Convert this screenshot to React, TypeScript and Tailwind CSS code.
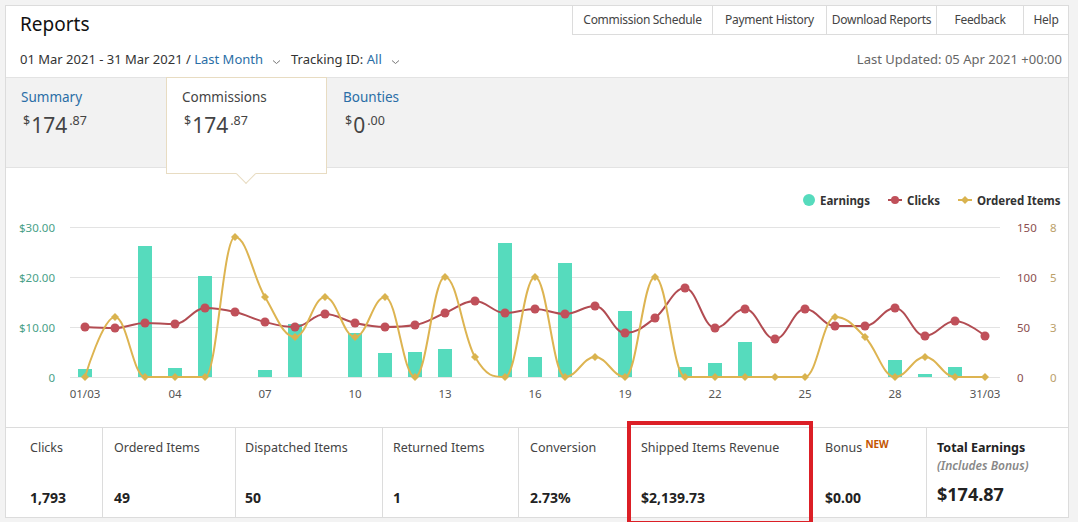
import React from "react";

const earnings = [1.6, 0, 26.2, 1.8, 20.2, 0, 1.4, 10.6, 0, 8.8, 4.8, 5, 5.6, 0, 26.8, 4, 22.8, 0, 13.2, 0, 2, 2.8, 7, 0, 0, 0, 0, 3.4, 0.6, 2, 0];
const clicks = [50, 49, 54, 53, 69, 65, 55, 50, 63, 54, 50, 52, 64, 76, 64, 68, 63, 71, 44, 59, 89, 49, 68, 38, 68, 51, 51, 69, 41, 56, 41];
const ordered = [0, 3, 0, 0, 0, 7, 4, 2, 4, 2, 4, 0, 5, 1, 0, 5, 0, 1, 0, 5, 0, 0, 0, 0, 0, 3, 2, 0, 1, 0, 0];

const dayX = (i: number) => 85 + i * 30;
const BASE = 377;

type Pt = { x: number; y: number };

// highcharts-like spline: flat tangents at local extremes
function spline(pts: Pt[]) {
  const ctrl = pts.map((p, i) => {
    if (i === 0 || i === pts.length - 1) return { lx: p.x, ly: p.y, rx: p.x, ry: p.y };
    const a = pts[i - 1];
    const b = pts[i + 1];
    const lx = (1.5 * p.x + a.x) / 2.5;
    let ly = (1.5 * p.y + a.y) / 2.5;
    const rx = (1.5 * p.x + b.x) / 2.5;
    let ry = (1.5 * p.y + b.y) / 2.5;
    const corr = ((ry - ly) * (rx - p.x)) / (rx - lx) + p.y - ry;
    ly += corr;
    ry += corr;
    if (ly > a.y && ly > p.y) {
      ly = Math.max(a.y, p.y);
      ry = 2 * p.y - ly;
    } else if (ly < a.y && ly < p.y) {
      ly = Math.min(a.y, p.y);
      ry = 2 * p.y - ly;
    }
    if (ry > b.y && ry > p.y) {
      ry = Math.max(b.y, p.y);
      ly = 2 * p.y - ry;
    } else if (ry < b.y && ry < p.y) {
      ry = Math.min(b.y, p.y);
      ly = 2 * p.y - ry;
    }
    return { lx, ly, rx, ry };
  });
  let d = `M ${pts[0].x} ${pts[0].y}`;
  for (let i = 1; i < pts.length; i++) {
    d += ` C ${ctrl[i - 1].rx} ${ctrl[i - 1].ry} ${ctrl[i].lx} ${ctrl[i].ly} ${pts[i].x} ${pts[i].y}`;
  }
  return d;
}

const clickPts = clicks.map((c, i) => ({ x: dayX(i), y: BASE - c }));
const orderPts = ordered.map((o, i) => ({ x: dayX(i), y: BASE - o * 20 }));

function Chevron() {
  return (
    <svg width="9" height="6" viewBox="0 0 9 6" className="ml-[9px] mt-[4px]">
      <path d="M1 1.5 L4.5 4.5 L8 1.5" fill="none" stroke="#777" strokeWidth="1" />
    </svg>
  );
}

function Chart() {
  const grid = [227, 277, 327, 377];
  const left = ["$30.00", "$20.00", "$10.00", "0"];
  const rightA = ["150", "100", "50", "0"];
  const rightB = ["8", "5", "3", "0"];
  const xLabels = ["01/03", "04", "07", "10", "13", "16", "19", "22", "25", "28", "31/03"];
  return (
    <svg width="1062" height="259" viewBox="6 168 1062 259" className="block">
      {/* legend */}
      <circle cx="809" cy="200" r="6" fill="#56dbbd" />
      <text x="820" y="204.5" fontSize="11.5" fontWeight="700" fill="#333">Earnings</text>
      <line x1="888" y1="200" x2="902" y2="200" stroke="#b24c52" strokeWidth="2" />
      <circle cx="895" cy="200" r="4" fill="#c0505a" />
      <text x="907" y="204.5" fontSize="11.5" fontWeight="700" fill="#333">Clicks</text>
      <line x1="958" y1="200" x2="972" y2="200" stroke="#ddb451" strokeWidth="2" />
      <path d="M965 196 L969 200 L965 204 L961 200 Z" fill="#d9b34f" />
      <text x="977" y="204.5" fontSize="11.5" fontWeight="700" fill="#333">Ordered Items</text>

      {/* grid + axes */}
      {grid.map((y, i) => (
        <g key={y}>
          <line x1="70" y1={y + 0.5} x2="1000" y2={y + 0.5} stroke="#e3e3e3" strokeWidth="1" />
          <text x="55" y={y + 4.5} fontSize="11.5" fill="#4a9f88" textAnchor="end">{left[i]}</text>
          <text x="1017" y={y + 4.5} fontSize="11.5" fill="#8c4f4f">{rightA[i]}</text>
          <text x="1050" y={y + 4.5} fontSize="11.5" fill="#bba06a">{rightB[i]}</text>
        </g>
      ))}
      {xLabels.map((l, i) => (
        <text key={l} x={dayX(i * 3)} y="397.5" fontSize="11.5" fill="#555" textAnchor="middle">{l}</text>
      ))}

      {/* bars */}
      {earnings.map((v, i) =>
        v > 0 ? <rect key={i} x={dayX(i) - 7} y={BASE - v * 5} width="14" height={v * 5} fill="#56dbbd" /> : null
      )}

      {/* clicks */}
      <path d={spline(clickPts)} fill="none" stroke="#b24c52" strokeWidth="2" />
      {clickPts.map((p, i) => (
        <circle key={i} cx={p.x} cy={p.y} r="4.5" fill="#c0505a" />
      ))}

      {/* ordered items */}
      <path d={spline(orderPts)} fill="none" stroke="#ddb451" strokeWidth="2" />
      {orderPts.map((p, i) => (
        <path key={i} d={`M${p.x} ${p.y - 4} L${p.x + 4} ${p.y} L${p.x} ${p.y + 4} L${p.x - 4} ${p.y} Z`} fill="#d9b34f" />
      ))}
    </svg>
  );
}

function Amount({ whole, cents }: { whole: string; cents: string }) {
  return (
    <div className="flex items-start text-[#444] mt-[5px]">
      <span className="text-[12.5px] leading-[14px] mt-[2px] ml-[2px] mr-[1px]">$</span>
      <span className="text-[21px] leading-[26px]">{whole}</span>
      <span className="text-[12.5px] leading-[14px] mt-[2px] ml-[2px]">.{cents}</span>
    </div>
  );
}

const stats = [
  { label: "Clicks", value: "1,793", cls: "w-[96px] pl-[24px]" },
  { label: "Ordered Items", value: "49", cls: "w-[133px] pl-[11px] border-l border-[#dcdcdc]" },
  { label: "Dispatched Items", value: "50", cls: "w-[147px] pl-[9px] border-l border-[#dcdcdc]" },
  { label: "Returned Items", value: "1", cls: "w-[136px] pl-[10px] border-l border-[#dcdcdc]" },
  { label: "Conversion", value: "2.73%", cls: "w-[110px] pl-[11px] border-l border-[#dcdcdc]" },
  { label: "Shipped Items Revenue", value: "$2,139.73", cls: "w-[184px] pl-[12px] border-l border-[#dcdcdc]" },
];

export default function App() {
  return (
    <div className="relative w-[1078px] h-[522px] overflow-hidden bg-[#f3f3f3] pt-[5px] pl-[5px] font-['Noto_Sans',sans-serif] text-[#333]">
      <div className="w-[1064px] border border-[#dcdcdc] bg-white">
        {/* header */}
        <div className="h-[72px] border-b border-[#e3e3e3]">
          <div className="flex justify-between h-[36px]">
            <div className="pl-[14px] pt-[5px] text-[19px] leading-[26px] text-[#111]">Reports</div>
            <div className="flex items-start text-[12px] tracking-[-0.3px] text-[#444] whitespace-nowrap">
              {[
                ["Commission Schedule", "w-[140px]"],
                ["Payment History", "w-[114px]"],
                ["Download Reports", "w-[110px]"],
                ["Feedback", "w-[87px]"],
                ["Help", "w-[45px]"],
              ].map(([t, w]) => (
                <div key={t} className={`${w} h-[29px] flex items-center justify-center border-l border-b border-[#dcdcdc]`}>
                  {t}
                </div>
              ))}
            </div>
          </div>
          <div className="flex justify-between items-center h-[35px] pl-[14px] pr-[6px] text-[13px]">
            <div className="flex items-center">
              <span>01 Mar 2021 - 31 Mar 2021 /&nbsp;</span>
              <span className="text-[#2a6ea6]">Last Month</span>
              <Chevron />
              <span className="ml-[10px]">Tracking ID:&nbsp;</span>
              <span className="text-[#2a6ea6]">All</span>
              <Chevron />
            </div>
            <div className="text-[#666]">Last Updated: 05 Apr 2021 +00:00</div>
          </div>
        </div>

        {/* tabs band */}
        <div className="h-[90px] bg-[#f2f2f2] border-b border-[#e3e3e3] flex">
          <div className="w-[160px] pl-[15px] pt-[9px]">
            <div className="text-[13.5px] leading-[20px] text-[#2a6ea6]">Summary</div>
            <Amount whole="174" cents="87" />
          </div>
          <div className="relative z-10 -mt-px w-[161px] h-[97px] pl-[15px] pt-[9px] bg-white border border-[#e8dcc2]">
            <div className="text-[13.5px] leading-[20px] text-[#444]">Commissions</div>
            <Amount whole="174" cents="87" />
            <div className="absolute left-[72px] bottom-[-8px] w-[14px] h-[14px] rotate-45 bg-white border-r border-b border-[#e8dcc2]" />
          </div>
          <div className="w-[161px] pl-[16px] pt-[9px]">
            <div className="text-[13.5px] leading-[20px] text-[#2a6ea6]">Bounties</div>
            <Amount whole="0" cents="00" />
          </div>
        </div>

        {/* chart */}
        <Chart />

        {/* stats */}
        <div className="flex h-[90px] border-t border-[#dcdcdc]">
          {stats.map((s) => (
            <div key={s.label} className={`${s.cls} flex flex-col justify-between pt-[11px] pb-[10px]`}>
              <div className="text-[12.5px] leading-[18px] text-[#444]">{s.label}</div>
              <div className="text-[14px] leading-[18px] font-bold text-[#222]">{s.value}</div>
            </div>
          ))}
          <div className="w-[114px] pl-[12px] border-l border-[#dcdcdc] flex flex-col justify-between pt-[11px] pb-[10px]">
            <div className="text-[12.5px] leading-[18px] text-[#444]">
              Bonus <span className="relative top-[-4px] text-[10px] font-bold text-[#c45500]">NEW</span>
            </div>
            <div className="text-[14px] leading-[18px] font-bold text-[#222]">$0.00</div>
          </div>
          <div className="w-[142px] pl-[10px] border-l border-[#dcdcdc] flex flex-col pt-[11px]">
            <div className="text-[12.5px] leading-[18px] font-bold text-[#222]">Total Earnings</div>
            <div className="text-[12px] leading-[18px] italic font-semibold text-[#888]">(Includes Bonus)</div>
            <div className="mt-[8px] text-[18px] leading-[22px] font-bold text-[#222]">$174.87</div>
          </div>
        </div>
      </div>

      {/* red highlight annotation */}
      <div className="absolute left-[627px] top-[421px] w-[186px] h-[104px] border-[4px] border-[#dc1f26]" />
    </div>
  );
}
